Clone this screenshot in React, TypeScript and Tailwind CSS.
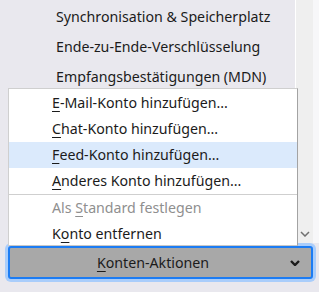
import React from 'react';

const font = { fontFamily: '"Noto Sans", "Open Sans", sans-serif' };

const sections = [
    'Synchronisation & Speicherplatz',
    'Ende-zu-Ende-Verschlüsselung',
    'Empfangsbestätigungen (MDN)',
];

interface MenuItem {
    key: string;
    before: string;
    accel: string;
    after: string;
    disabled?: boolean;
    active?: boolean;
}

const addItems: MenuItem[] = [
    { key: 'mail', before: '', accel: 'E', after: '-Mail-Konto hinzufügen...' },
    { key: 'chat', before: '', accel: 'C', after: 'hat-Konto hinzufügen...' },
    { key: 'feed', before: '', accel: 'F', after: 'eed-Konto hinzufügen...', active: true },
    { key: 'other', before: '', accel: 'A', after: 'nderes Konto hinzufügen...' },
];

const manageItems: MenuItem[] = [
    { key: 'default', before: 'Als ', accel: 'S', after: 'tandard festlegen', disabled: true },
    { key: 'remove', before: 'K', accel: 'o', after: 'nto entfernen' },
];

const Row: React.FC<{ item: MenuItem }> = ({ item }) => (
    <div
        className={`h-[26px] flex items-center pl-[43px] text-[14.2px] ${item.active ? 'bg-[#dbeafc]' : ''} ${item.disabled ? 'text-[#8f8f8f]' : 'text-[#1b1b1b]'}`}
    >
        <span>
            {item.before}
            <span className="underline underline-offset-[3px]">{item.accel}</span>
            {item.after}
        </span>
    </div>
);

const Chevron: React.FC<{ className?: string; strokeWidth?: number }> = ({ className, strokeWidth = 1.5 }) => (
    <svg viewBox="0 0 10 6" className={className} fill="none" stroke="currentColor" strokeWidth={strokeWidth}>
        <path d="M1 1l4 4 4-4" />
    </svg>
);

export default function App() {
    return (
        <div className="relative w-[319px] h-[292px] overflow-hidden bg-[#e9e8ee] select-none" style={font}>
            <div className="flex h-[243px]">
                <div className="w-[295px] pt-[2px]">
                    {sections.map(s => (
                        <div key={s} className="h-[30px] flex items-center pl-[56px] text-[14.2px] text-[#1b1b1b]">{s}</div>
                    ))}
                </div>
                <div className="w-px bg-white" />
                <div className="w-[17px] bg-[#efefef] flex flex-col justify-end items-center pb-[6px]">
                    <Chevron className="w-[10px] h-[6px] text-[#707070]" />
                </div>
                <div className="flex-1 bg-[#f7f7f9]" />
            </div>

            <div className="pt-[3px] pl-[8px]">
                <button className="w-[305px] h-[33px] flex items-center bg-[#a8a8a8] border-2 border-[#1c7cf3] rounded-[3px] ring-[3px] ring-[#a9cdfb] text-[14.2px] text-[#1b1b1b]">
                    <span className="flex-1 text-center pl-[6px]">
                        <span className="underline underline-offset-[3px]">K</span>onten-Aktionen
                    </span>
                    <Chevron className="w-[10px] h-[6px] mr-[11px] text-[#1b1b1b]" strokeWidth={2.4} />
                </button>
            </div>

            <div className="absolute left-[8px] top-[88px] w-[290px] h-[158px] bg-white border border-[#cfcfcf] border-r-[#a3a3a3] border-b-[#c8c8c8] pt-px">
                {addItems.map(i => <Row key={i.key} item={i} />)}
                <div className="h-px bg-[#cfcfcf]" />
                {manageItems.map(i => <Row key={i.key} item={i} />)}
            </div>
        </div>
    );
}
